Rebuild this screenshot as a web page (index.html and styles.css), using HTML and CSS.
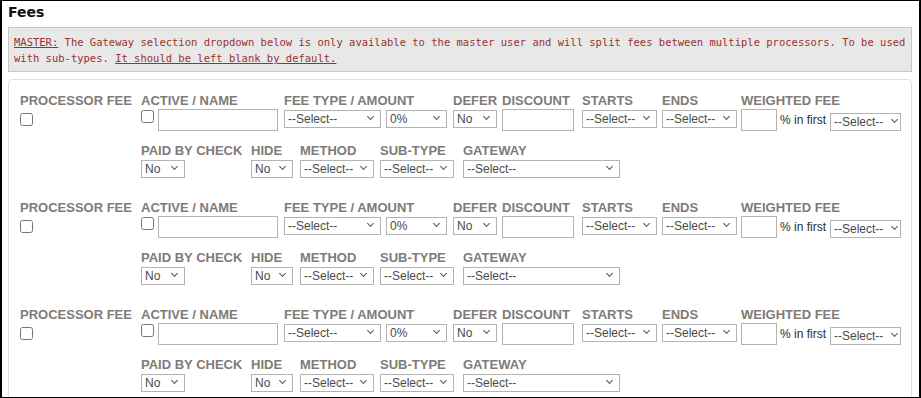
FILE: index.html
```html
<!DOCTYPE html>
<html>
<head>
<meta charset="utf-8">
<link rel="stylesheet" href="styles.css">
</head>
<body>
<div class="frame">
  <h2 class="title">Fees</h2>
  <div class="notice"><span class="u">MASTER:</span> The Gateway selection dropdown below is only available to the master user and will split fees between multiple processors. To be used<br>with sub-types. <span class="u">It should be left blank by default.</span></div>
  <div class="panel">

    <div class="fee">
      <div class="pf">
        <div class="lbl">PROCESSOR FEE</div>
        <input type="checkbox" class="cb pfcb">
      </div>
      <div class="main">
        <div class="line">
          <div class="fld w-active"><div class="lbl">ACTIVE / NAME</div><div class="ctl"><input type="checkbox" class="cb"><input type="text" class="txt t-name"></div></div>
          <div class="fld w-fee"><div class="lbl">FEE TYPE / AMOUNT</div><div class="ctl"><span class="sel s-type"><select><option>--Select--</option></select></span><span class="sel s-amt"><select><option>0%</option></select></span></div></div>
          <div class="fld w-defer"><div class="lbl">DEFER</div><div class="ctl"><span class="sel s-no"><select><option>No</option></select></span></div></div>
          <div class="fld w-disc"><div class="lbl">DISCOUNT</div><div class="ctl"><input type="text" class="txt t-disc"></div></div>
          <div class="fld w-start"><div class="lbl">STARTS</div><div class="ctl"><span class="sel s-date"><select><option>--Select--</option></select></span></div></div>
          <div class="fld w-end"><div class="lbl">ENDS</div><div class="ctl"><span class="sel s-date"><select><option>--Select--</option></select></span></div></div>
          <div class="fld"><div class="lbl">WEIGHTED FEE</div><div class="ctl"><input type="text" class="txt t-wt"><span class="pct">% in first</span><span class="sel s-first"><select><option>--Select--</option></select></span></div></div>
        </div>
        <div class="line line2">
          <div class="fld w-paid"><div class="lbl">PAID BY CHECK</div><div class="ctl"><span class="sel s-no"><select><option>No</option></select></span></div></div>
          <div class="fld w-hide"><div class="lbl">HIDE</div><div class="ctl"><span class="sel s-hide"><select><option>No</option></select></span></div></div>
          <div class="fld w-method"><div class="lbl">METHOD</div><div class="ctl"><span class="sel s-mid"><select><option>--Select--</option></select></span></div></div>
          <div class="fld w-sub"><div class="lbl">SUB-TYPE</div><div class="ctl"><span class="sel s-mid"><select><option>--Select--</option></select></span></div></div>
          <div class="fld"><div class="lbl">GATEWAY</div><div class="ctl"><span class="sel s-gw"><select><option>--Select--</option></select></span></div></div>
        </div>
      </div>
    </div>

    <div class="fee">
      <div class="pf">
        <div class="lbl">PROCESSOR FEE</div>
        <input type="checkbox" class="cb pfcb">
      </div>
      <div class="main">
        <div class="line">
          <div class="fld w-active"><div class="lbl">ACTIVE / NAME</div><div class="ctl"><input type="checkbox" class="cb"><input type="text" class="txt t-name"></div></div>
          <div class="fld w-fee"><div class="lbl">FEE TYPE / AMOUNT</div><div class="ctl"><span class="sel s-type"><select><option>--Select--</option></select></span><span class="sel s-amt"><select><option>0%</option></select></span></div></div>
          <div class="fld w-defer"><div class="lbl">DEFER</div><div class="ctl"><span class="sel s-no"><select><option>No</option></select></span></div></div>
          <div class="fld w-disc"><div class="lbl">DISCOUNT</div><div class="ctl"><input type="text" class="txt t-disc"></div></div>
          <div class="fld w-start"><div class="lbl">STARTS</div><div class="ctl"><span class="sel s-date"><select><option>--Select--</option></select></span></div></div>
          <div class="fld w-end"><div class="lbl">ENDS</div><div class="ctl"><span class="sel s-date"><select><option>--Select--</option></select></span></div></div>
          <div class="fld"><div class="lbl">WEIGHTED FEE</div><div class="ctl"><input type="text" class="txt t-wt"><span class="pct">% in first</span><span class="sel s-first"><select><option>--Select--</option></select></span></div></div>
        </div>
        <div class="line line2">
          <div class="fld w-paid"><div class="lbl">PAID BY CHECK</div><div class="ctl"><span class="sel s-no"><select><option>No</option></select></span></div></div>
          <div class="fld w-hide"><div class="lbl">HIDE</div><div class="ctl"><span class="sel s-hide"><select><option>No</option></select></span></div></div>
          <div class="fld w-method"><div class="lbl">METHOD</div><div class="ctl"><span class="sel s-mid"><select><option>--Select--</option></select></span></div></div>
          <div class="fld w-sub"><div class="lbl">SUB-TYPE</div><div class="ctl"><span class="sel s-mid"><select><option>--Select--</option></select></span></div></div>
          <div class="fld"><div class="lbl">GATEWAY</div><div class="ctl"><span class="sel s-gw"><select><option>--Select--</option></select></span></div></div>
        </div>
      </div>
    </div>

    <div class="fee">
      <div class="pf">
        <div class="lbl">PROCESSOR FEE</div>
        <input type="checkbox" class="cb pfcb">
      </div>
      <div class="main">
        <div class="line">
          <div class="fld w-active"><div class="lbl">ACTIVE / NAME</div><div class="ctl"><input type="checkbox" class="cb"><input type="text" class="txt t-name"></div></div>
          <div class="fld w-fee"><div class="lbl">FEE TYPE / AMOUNT</div><div class="ctl"><span class="sel s-type"><select><option>--Select--</option></select></span><span class="sel s-amt"><select><option>0%</option></select></span></div></div>
          <div class="fld w-defer"><div class="lbl">DEFER</div><div class="ctl"><span class="sel s-no"><select><option>No</option></select></span></div></div>
          <div class="fld w-disc"><div class="lbl">DISCOUNT</div><div class="ctl"><input type="text" class="txt t-disc"></div></div>
          <div class="fld w-start"><div class="lbl">STARTS</div><div class="ctl"><span class="sel s-date"><select><option>--Select--</option></select></span></div></div>
          <div class="fld w-end"><div class="lbl">ENDS</div><div class="ctl"><span class="sel s-date"><select><option>--Select--</option></select></span></div></div>
          <div class="fld"><div class="lbl">WEIGHTED FEE</div><div class="ctl"><input type="text" class="txt t-wt"><span class="pct">% in first</span><span class="sel s-first"><select><option>--Select--</option></select></span></div></div>
        </div>
        <div class="line line2">
          <div class="fld w-paid"><div class="lbl">PAID BY CHECK</div><div class="ctl"><span class="sel s-no"><select><option>No</option></select></span></div></div>
          <div class="fld w-hide"><div class="lbl">HIDE</div><div class="ctl"><span class="sel s-hide"><select><option>No</option></select></span></div></div>
          <div class="fld w-method"><div class="lbl">METHOD</div><div class="ctl"><span class="sel s-mid"><select><option>--Select--</option></select></span></div></div>
          <div class="fld w-sub"><div class="lbl">SUB-TYPE</div><div class="ctl"><span class="sel s-mid"><select><option>--Select--</option></select></span></div></div>
          <div class="fld"><div class="lbl">GATEWAY</div><div class="ctl"><span class="sel s-gw"><select><option>--Select--</option></select></span></div></div>
        </div>
      </div>
    </div>

  </div>
</div>
</body>
</html>
```

FILE: styles.css
```css
html, body {
  margin: 0;
  padding: 0;
  background: #fff;
}
.frame {
  box-sizing: border-box;
  width: 921px;
  height: 398px;
  border: 1px solid #000;
  border-right-width: 2px;
  border-left-width: 2px;
  overflow: hidden;
  padding-left: 6px;
}
.title {
  margin: 3px 0 6px 0;
  font-family: "DejaVu Sans", sans-serif;
  font-weight: bold;
  font-size: 14px;
  line-height: 17px;
  color: #111;
}
.notice {
  box-sizing: border-box;
  width: 904px;
  height: 45px;
  background: #e8e8e8;
  border: 1px solid #c6c6c6;
  padding: 6px 5px 0 5px;
  font-family: "DejaVu Sans Mono", monospace;
  font-size: 10.5px;
  line-height: 16px;
  color: #98342c;
  white-space: nowrap;
}
.u {
  text-decoration: underline;
}
.panel {
  box-sizing: border-box;
  width: 904px;
  margin-top: 7px;
  height: 400px;
  border: 1px solid #dedede;
  border-radius: 4px;
  padding: 14px 0 0 11px;
}
.fee {
  display: flex;
  margin-bottom: 24px;
}
.pf {
  width: 121px;
  flex: none;
}
.main {
  display: flex;
  flex-direction: column;
}
.line {
  display: flex;
  align-items: flex-start;
}
.line2 {
  margin-top: 13px;
}
.fld {
  flex: none;
}
.lbl {
  font-family: "Liberation Sans", Arial, sans-serif;
  font-weight: bold;
  font-size: 13px;
  line-height: 14px;
  padding-bottom: 1px;
  color: #7e7b79;
  white-space: nowrap;
}
.ctl {
  display: flex;
  align-items: flex-start;
}
.w-active { width: 143px; }
.w-fee { width: 169px; }
.w-defer { width: 49px; }
.w-disc { width: 80px; }
.w-start { width: 80px; }
.w-end { width: 79px; }
.w-paid { width: 110px; }
.w-hide { width: 49px; }
.w-method { width: 80px; }
.w-sub { width: 83px; }

.cb {
  width: 13px;
  height: 13px;
  margin: 1px 4px 0 0;
  flex: none;
}
.pfcb {
  margin: 4px 0 0 0;
}
.txt {
  box-sizing: border-box;
  height: 22px;
  margin: 0;
  border: 1px solid #b3b3b3;
  border-radius: 0;
  padding: 0 3px;
  background: #fff;
  font-family: "Liberation Sans", Arial, sans-serif;
  font-size: 12px;
  outline: none;
}
.t-name { width: 120px; }
.t-disc { width: 72px; }
.t-wt { width: 36px; }
.pct {
  font-family: "Liberation Sans", Arial, sans-serif;
  font-size: 12px;
  line-height: 14px;
  color: #2c2c3a;
  margin: 4px 4px 0 3px;
  white-space: nowrap;
}
.sel {
  position: relative;
  display: block;
  flex: none;
  height: 18px;
}
.sel select {
  -webkit-appearance: none;
  appearance: none;
  box-sizing: border-box;
  width: 100%;
  height: 18px;
  margin: 0;
  border: 1px solid #b3b3b3;
  border-radius: 0;
  background: #fff;
  padding: 0 0 0 3px;
  font-family: "Liberation Sans", Arial, sans-serif;
  font-size: 12px;
  line-height: 16px;
  color: #4a4a4a;
  outline: none;
}
.sel::after {
  content: "";
  position: absolute;
  right: 8px;
  top: 5px;
  width: 4px;
  height: 4px;
  border-right: 1.5px solid #555;
  border-bottom: 1.5px solid #555;
  transform: rotate(45deg);
  pointer-events: none;
}
.s-type { width: 97px; margin-right: 5px; }
.s-amt { width: 61px; }
.s-no { width: 44px; }
.s-hide { width: 42px; }
.s-date { width: 75px; }
.s-mid { width: 74px; }
.s-gw { width: 157px; }
.s-first { width: 71px; margin-top: 3px; }
.s-first::after { right: 4px; }
```
